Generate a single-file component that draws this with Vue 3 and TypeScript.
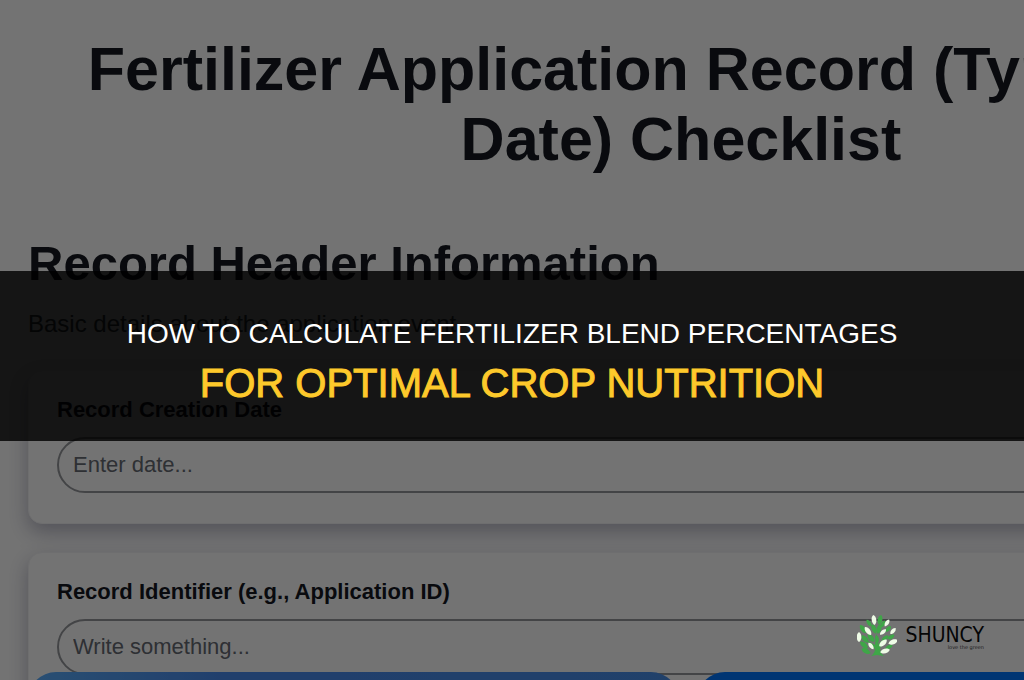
<script setup lang="ts">
interface Field {
  id: string
  label: string
  placeholder: string
}

interface Leaf {
  x: number
  y: number
  angle: number
  size: number
  light: boolean
}

const fields: Field[] = [
  { id: 'creation-date', label: 'Record Creation Date', placeholder: 'Enter date...' },
  { id: 'identifier', label: 'Record Identifier (e.g., Application ID)', placeholder: 'Write something...' },
]

const leaves: Leaf[] = [
  { x: 23, y: 5, angle: 12, size: 5, light: false },
  { x: 26, y: 9, angle: 30, size: 4, light: false },
  { x: 12, y: 8, angle: -35, size: 4, light: false },
  { x: 31, y: 14, angle: 45, size: 4, light: false },
  { x: 6, y: 14, angle: -35, size: 5, light: false },
  { x: 17, y: 14, angle: -22, size: 5, light: false },
  { x: 22, y: 14, angle: 15, size: 5, light: false },
  { x: 34, y: 22, angle: 58, size: 4, light: false },
  { x: 28, y: 23, angle: 55, size: 4, light: false },
  { x: 8, y: 24, angle: -45, size: 5, light: false },
  { x: 14, y: 23, angle: -40, size: 5, light: false },
  { x: 7, y: 30, angle: -50, size: 5, light: false },
  { x: 9, y: 36, angle: -62, size: 5, light: false },
  { x: 32, y: 32, angle: 66, size: 4, light: false },
  { x: 20, y: 24, angle: -12, size: 4, light: false },
  { x: 17, y: 5, angle: -8, size: 5, light: true },
  { x: 30, y: 8, angle: 32, size: 4, light: true },
  { x: 36, y: 16, angle: 40, size: 4, light: true },
  { x: 11, y: 16, angle: -38, size: 5, light: true },
  { x: 2, y: 22, angle: 0, size: 5, light: true },
  { x: 26, y: 17, angle: 48, size: 4, light: true },
  { x: 36, y: 27, angle: 68, size: 5, light: true },
  { x: 26, y: 28, angle: 48, size: 5, light: true },
  { x: 14, y: 31, angle: -38, size: 4, light: true },
  { x: 28, y: 36, angle: 75, size: 5, light: true },
]
</script>

<template>
  <main class="screen">
    <form class="sheet" @submit.prevent>
      <h1>Fertilizer Application Record (Type, Rate,<br />Date) Checklist</h1>
      <h2>Record Header Information</h2>
      <p class="intro">Basic details about the application event.</p>
      <section v-for="field in fields" :key="field.id" class="card">
        <label :for="field.id">{{ field.label }}</label>
        <input :id="field.id" type="text" :placeholder="field.placeholder" />
      </section>
    </form>

    <div class="actions">
      <button type="button" class="secondary" aria-label="Preview"></button>
      <button type="button" class="primary" aria-label="Save"></button>
    </div>

    <div class="shade"></div>

    <div class="banner">
      <p class="lead">HOW TO CALCULATE FERTILIZER BLEND PERCENTAGES</p>
      <p class="topic">FOR OPTIMAL CROP NUTRITION</p>
    </div>

    <div class="brand">
      <svg class="tree" viewBox="0 0 40 42" width="40" height="42" aria-hidden="true">
        <path
          d="M14 41 Q18 38 18 34 L9 25 L18 30 L19.500 18 L21 29 L31 20 L23 33 Q23 38 27 41 L20 40 Z"
          fill="#3fa648"
        />
        <path
          v-for="(leaf, i) in leaves"
          :key="i"
          d="M0 -1 C.65 -.6 .6 .6 0 1 C-.6 .6 -.65 -.6 0 -1Z"
          :transform="`translate(${leaf.x} ${leaf.y}) rotate(${leaf.angle}) scale(${leaf.size})`"
          :fill="leaf.light ? '#eefbe6' : '#3fa648'"
        />
      </svg>
      <div class="words">
        <span class="name">SHUNCY</span>
        <span class="tag">love the green</span>
      </div>
    </div>
  </main>
</template>

<style>
body {
  margin: 0;
}
</style>

<style scoped>
.screen {
  position: relative;
  height: 100vh;
  overflow: hidden;
  background: #ffffff;
  font-family: "Liberation Sans", Arial, sans-serif;
  color: #14181f;
}

.sheet {
  box-sizing: border-box;
  width: 133%;
  padding: 34px 28px 0;
}

h1 {
  margin: 0 0 60px;
  font-size: 61px;
  line-height: 70px;
  text-align: center;
  white-space: nowrap;
}

h2 {
  margin: 0;
  font-size: 49px;
  line-height: 58px;
}

.intro {
  margin: 18px 0 32px;
  font-size: 24px;
  line-height: 28px;
  color: #3a3f47;
}

.card {
  display: flex;
  flex-direction: column;
  gap: 14px;
  margin-bottom: 28px;
  padding: 26px 28px 30px;
  border: 1px solid #f4f4f6;
  border-radius: 14px;
  background: #ffffff;
  box-shadow: 0 8px 20px rgba(50, 50, 90, 0.35);
}

label {
  font-size: 22px;
  line-height: 26px;
  font-weight: 700;
}

input {
  box-sizing: border-box;
  width: 100%;
  height: 56px;
  padding: 0 14px;
  border: 2px solid #96989c;
  border-radius: 28px;
  background: #ffffff;
  font: 22px "Liberation Sans", Arial, sans-serif;
  color: #14181f;
}

input::placeholder {
  color: #666a73;
  opacity: 1;
}

.actions {
  position: absolute;
  top: calc(100% - 8px);
  left: 0;
  box-sizing: border-box;
  display: flex;
  gap: 18px;
  width: 133%;
  padding: 0 14px 0 28px;
}

.actions button {
  flex: 1;
  height: 56px;
  border: 0;
  border-radius: 28px;
}

.secondary {
  background: linear-gradient(90deg, #5cb0ff, #4a8cf0 30%, #4a90ec);
}

.primary {
  background: #0076ff;
}

.shade {
  position: absolute;
  inset: 0;
  background: rgba(0, 0, 0, 0.55);
}

.banner {
  position: absolute;
  top: 271px;
  left: 0;
  right: 0;
  box-sizing: border-box;
  display: flex;
  flex-direction: column;
  justify-content: center;
  height: 170px;
  padding-top: 8px;
  background: rgba(0, 0, 0, 0.82);
  text-align: center;
}

.banner p {
  margin: 0;
}

.lead {
  font-size: 28px;
  line-height: 46px;
  color: #ffffff;
}

.topic {
  font-size: 40px;
  line-height: 52px;
  color: #fdc92b;
  -webkit-text-stroke: 1px #fdc92b;
}

.brand {
  position: absolute;
  right: 40px;
  bottom: 23px;
  display: flex;
  gap: 8px;
  color: #050505;
}

.words {
  display: flex;
  flex-direction: column;
  align-items: flex-end;
  padding-top: 11px;
}

.name {
  font-family: "DejaVu Sans Condensed", "DejaVu Sans", sans-serif;
  font-size: 21px;
  line-height: 19px;
}

.tag {
  font-family: "DejaVu Sans", sans-serif;
  font-size: 5px;
  line-height: 5px;
  color: #202020;
}
</style>
